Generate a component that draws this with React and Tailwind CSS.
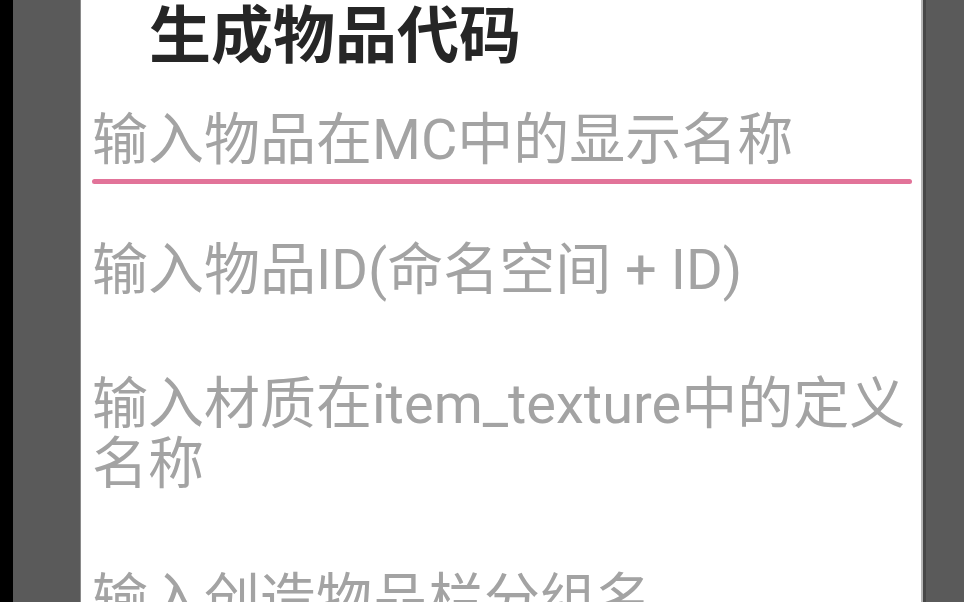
export default function App() {
  const font = { fontFamily: 'Roboto, "Noto Sans CJK SC", sans-serif' };
  return (
    <div className="flex h-[602px] w-[964px] overflow-hidden bg-[#5a5a5a]" style={font}>
      <div className="w-[13px] shrink-0 bg-black" />
      <div className="w-[67px] shrink-0 bg-[#5a5a5a]" />
      <div className="w-[1px] shrink-0 bg-[#8a8a8a]" />
      <div className="flex w-[840px] shrink-0 flex-col bg-white pl-[11px] pr-[9px]">
        <div className="h-[72px] pl-[57px] pt-[2px] text-[62px] font-bold leading-[70px] text-[#262626] whitespace-nowrap">
          生成物品代码
        </div>
        <div className="mt-[38px] flex flex-col">
          <div>
            <div className="text-[56px] leading-[60px] text-[#a3a3a3] whitespace-nowrap">输入物品在MC中的显示名称</div>
            <div className="mt-[9px] h-[5px] rounded-full bg-[#e27399]" />
          </div>
          <div className="mt-[56px]">
            <div className="text-[56px] leading-[60px] text-[#a3a3a3] whitespace-nowrap">输入物品ID(命名空间 + ID)</div>
            <div className="mt-[9px] h-[5px]" />
          </div>
          <div className="mt-[60px]">
            <div className="text-[56px] leading-[60px] text-[#a3a3a3] whitespace-nowrap">输入材质在item_texture中的定义</div>
            <div className="text-[56px] leading-[60px] text-[#a3a3a3] whitespace-nowrap">名称</div>
            <div className="mt-[9px] h-[5px]" />
          </div>
          <div className="mt-[62px]">
            <div className="text-[56px] leading-[60px] text-[#a3a3a3] whitespace-nowrap">输入创造物品栏分组名</div>
          </div>
        </div>
      </div>
      <div className="w-[2px] shrink-0 bg-[#b5b5b5]" />
      <div className="w-[3px] shrink-0 bg-[#474747]" />
      <div className="flex-1 bg-[#5a5a5a]" />
    </div>
  );
}
